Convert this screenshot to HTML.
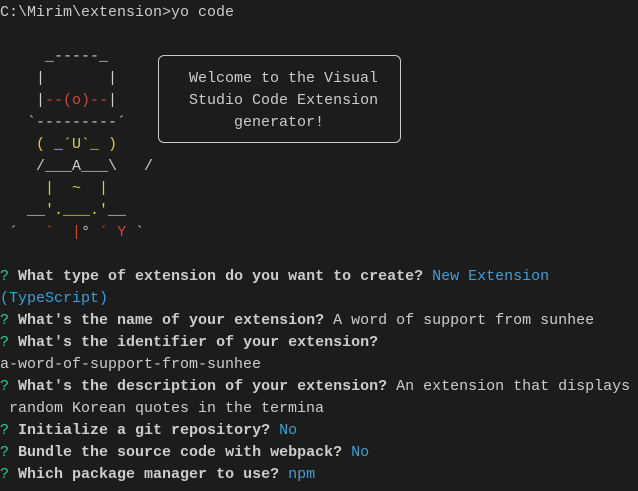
<!DOCTYPE html>
<html><head><meta charset="utf-8"><style>
html,body{margin:0;padding:0;background:#1c1c1c;width:638px;height:491px;overflow:hidden}
pre{margin:0;position:absolute;left:0;top:2px;font-family:"Liberation Mono",monospace;font-size:15px;line-height:22px;color:#cccccc;white-space:pre}
b{font-weight:bold}
.g{color:#23d18b}.c{color:#3b9fd8}.r{color:#d1463b}.y{color:#d4d43a}
.box{position:absolute;left:158px;top:55px;width:241px;height:86px;border:1.5px solid #cccccc;border-radius:6px}
</style></head><body>
<pre>C:\Mirim\extension&gt;yo code

     _-----_
    |       |        Welcome to the Visual
    |<span class="r">--(o)--</span>|        Studio Code Extension
   `---------´            generator!
    <span class="y">( _´U`_ )</span>
    /___A___\   /
     <span class="y">|  ~  |</span>
   __<span class="y">'.___.'</span>__
 ´   <span class="r">`</span>  <span class="r">|</span>° <span class="r">´ Y</span> `

<span class="g">?</span> <b>What type of extension do you want to create?</b> <span class="c">New Extension</span>
<span class="c">(TypeScript)</span>
<span class="g">?</span> <b>What's the name of your extension?</b> A word of support from sunhee
<span class="g">?</span> <b>What's the identifier of your extension?</b>
a-word-of-support-from-sunhee
<span class="g">?</span> <b>What's the description of your extension?</b> An extension that displays
 random Korean quotes in the termina
<span class="g">?</span> <b>Initialize a git repository?</b> <span class="c">No</span>
<span class="g">?</span> <b>Bundle the source code with webpack?</b> <span class="c">No</span>
<span class="g">?</span> <b>Which package manager to use?</b> <span class="c">npm</span></pre>
<div class="box"></div>
</body></html>
